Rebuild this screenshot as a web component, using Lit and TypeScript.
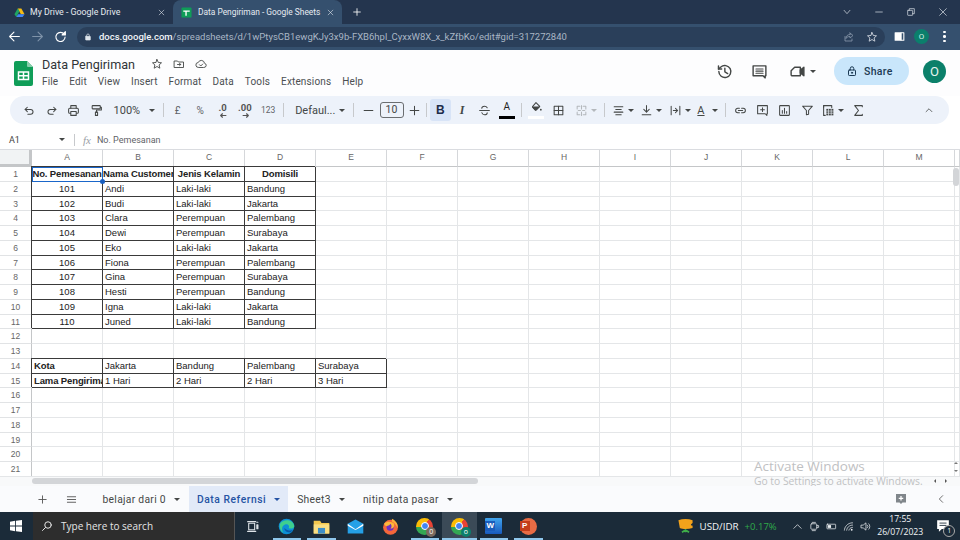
import { LitElement, css, html, svg } from "lit";
import { customElement } from "lit/decorators.js";

const ico = (body: unknown, cls = "ic") => html`<svg class=${cls} viewBox="0 0 24 24" fill="none" stroke="currentColor" stroke-width="2" stroke-linecap="round" stroke-linejoin="round">${body}</svg>`;

const icons = {
  back: svg`<path d="M21 12H4M11 4l-8 8 8 8"/>`,
  forward: svg`<path d="M3 12h17M13 4l8 8-8 8"/>`,
  reload: svg`<path d="M19 8a8.500 8.500 0 1 0 1.500 5"/><path d="M21 3v6h-6z" fill="currentColor"/>`,
  lock: svg`<rect x="5" y="10" width="14" height="11" rx="1" fill="currentColor"/><path d="M8 10V7a4 4 0 0 1 8 0v3"/>`,
  shareUp: svg`<path d="M4 11v9h14v-4M14 4l6 5-6 5v-3c-4 0-6 1-8 4 0-5 3-8 8-8z"/>`,
  star: svg`<path d="M12 3l2.700 6 6.300.600-4.800 4.300 1.500 6.500L12 17l-5.700 3.400 1.500-6.500L3 9.600 9.300 9z"/>`,
  folderMove: svg`<path d="M3 6h6l2 2h10v11H3z"/><path d="M9 13h6M13 10.500l2.500 2.500-2.500 2.500"/>`,
  cloud: svg`<path d="M7 19a5 5 0 0 1-.5-10A6.500 6.500 0 0 1 19 10.500 4.300 4.300 0 0 1 18 19z"/><path d="M9 13.500l2.500 2.500 4-4"/>`,
  history: svg`<path d="M4 12a8.500 8.500 0 1 0 2.800-6.300L3.500 8.500"/><path d="M3.500 4v4.500H8"/><path d="M12.500 7.500V12.500l4 2.500"/>`,
  comment: svg`<path d="M3 4h18v14h-1v3l-3-3H3z"/><path d="M7 8.500h10M7 11.500h10M7 14.500h10" stroke-width="1.600"/>`,
  meet: svg`<path d="M8 6h8v12H4a1.500 1.500 0 0 1-1-1.500V11z"/><path d="M16 10l5-4v12l-5-4z" fill="currentColor"/>`,
  padlock: svg`<rect x="5" y="10" width="14" height="11" rx="1.500"/><path d="M8.500 10V7a3.500 3.500 0 0 1 7 0v3"/><circle cx="12" cy="15.500" r="1.200" fill="currentColor"/>`,
  undo: svg`<path d="M8 6L4 10l4 4"/><path d="M4 10h10a4.500 4.500 0 0 1 0 9H9"/>`,
  redo: svg`<path d="M16 6l4 4-4 4"/><path d="M20 10H10a4.500 4.500 0 0 0 0 9h5"/>`,
  print: svg`<path d="M7 8V3h10v5"/><rect x="3" y="8" width="18" height="9" rx="2"/><path d="M7 14h10v7H7z" fill="#edf2fa"/>`,
  paint: svg`<rect x="4" y="3" width="15" height="6" rx="1"/><path d="M19 6h2v5h-9v4"/><rect x="10" y="15" width="4" height="6"/>`,
  strike: svg`<path d="M3 12h18"/><path d="M17 7c-1-2-3-3-5-3-3 0-5 1.500-5 4M7 16c1 2.500 3 4 5 4 3 0 5-1.500 5-4"/>`,
  fill: svg`<path d="M11 3l7 7-6.500 6.500a1.500 1.500 0 0 1-2 0L5 12a1.500 1.500 0 0 1 0-2z"/><path d="M5 11h12l-5.500 5.500a1.500 1.500 0 0 1-2 0z" fill="currentColor"/><circle cx="20" cy="16" r="1.700" fill="currentColor" stroke="none"/>`,
  borders: svg`<rect x="4" y="4" width="16" height="16"/><path d="M12 4v16M4 12h16"/>`,
  merge: svg`<path d="M4 9V4h5M15 4h5v5M4 15v5h5M15 20h5v-5M12 3v6M12 15v6M6 12h4M18 12h-4"/>`,
  align: svg`<path d="M4 5h16M7 10h10M4 15h16M7 20h10"/>`,
  valign: svg`<path d="M12 3v12M7 10l5 5 5-5M4 20h16"/>`,
  wrap: svg`<path d="M4 4v16M20 4v16M8 12h7M12 8l4 4-4 4"/>`,
  link: svg`<path d="M10 8H7a4 4 0 0 0 0 8h3M14 8h3a4 4 0 0 1 0 8h-3M8 12h8"/>`,
  addComment: svg`<path d="M3 3h18v15h-1v3l-3-3H3z"/><path d="M12 7v7M8.500 10.500h7"/>`,
  chart: svg`<rect x="3" y="3" width="18" height="18" rx="1"/><path d="M8 17v-5M12 17V8M16 17v-3"/>`,
  filter: svg`<path d="M3 4h18l-7 8v7l-4 1v-8z"/>`,
  func: svg`<path d="M3 6V3h15v4"/><path d="M3 3v18h3"/><rect x="8" y="9" width="13" height="12" fill="currentColor" stroke="none"/><path d="M12 9v12M17 9v12M8 13h13M8 17h13" stroke="#edf2fa" stroke-width="1.200"/>`,
  sigma: svg`<path d="M19 5V3H5l7 9-7 9h14v-2"/>`,
  up: svg`<path d="M5 16l7-7 7 7"/>`,
  plus: svg`<path d="M12 4v16M4 12h16"/>`,
  minus: svg`<path d="M4 12h16"/>`,
  menu: svg`<path d="M3 6h18M3 12h18M3 18h18"/>`,
  left: svg`<path d="M16 4l-8 8 8 8"/>`,
  down: svg`<path d="M5 8l7 8 7-8"/>`,
  close: svg`<path d="M4 4l16 16M20 4L4 20"/>`,
  restore: svg`<rect x="4" y="8" width="12" height="12" rx="1"/><path d="M8 8V4h12v12h-4"/>`,
  explore: svg`<rect x="3" y="4" width="13" height="16" rx="1" fill="currentColor" stroke="none"/><rect x="15" y="5" width="5" height="14" fill="#334f6d" stroke="#fff"/>`,
  search: svg`<circle cx="14" cy="10" r="6.500"/><path d="M9 15l-6 6"/>`,
  task: svg`<rect x="5" y="6" width="11" height="12"/><path d="M3 3h15M3 21h15M20 4h2M20 9h2v7h-2z"/>`,
  chev: svg`<path d="M4 16l8-8 8 8"/>`,
  cam: svg`<rect x="4" y="6" width="13" height="12" rx="2"/><path d="M17 10h4v4h-4M7 3h7M7 21h7"/>`,
  batt: svg`<rect x="2" y="7" width="19" height="10" rx="1"/><rect x="4" y="9" width="7" height="6" fill="currentColor" stroke="none"/>`,
  wifi: svg`<path d="M3 20A18 18 0 0 1 21 4M8 20A13 13 0 0 1 21 9M13 20a8 8 0 0 1 8-6" stroke-dasharray="2 1.500"/><circle cx="19" cy="19" r="2" fill="currentColor" stroke="none"/>`,
  vol: svg`<path d="M3 9h4l6-5v16l-6-5H3z"/><path d="M16 9a4 4 0 0 1 0 6M19 6a8 8 0 0 1 0 12"/>`,
  arrowL: svg`<path d="M22 12H4M10 6l-6 6 6 6" stroke-width="4"/>`,
  arrowR: svg`<path d="M2 12h18M14 6l6 6-6 6" stroke-width="4"/>`,
};

const caret = html`<i class="caret"></i>`;
const COLS = ["A", "B", "C", "D", "E", "F", "G", "H", "I", "J", "K", "L", "M", ""];

type Row = [string, string, string, string];
const people: Row[] = [
  ["101", "Andi", "Laki-laki", "Bandung"],
  ["102", "Budi", "Laki-laki", "Jakarta"],
  ["103", "Clara", "Perempuan", "Palembang"],
  ["104", "Dewi", "Perempuan", "Surabaya"],
  ["105", "Eko", "Laki-laki", "Jakarta"],
  ["106", "Fiona", "Perempuan", "Palembang"],
  ["107", "Gina", "Perempuan", "Surabaya"],
  ["108", "Hesti", "Perempuan", "Bandung"],
  ["109", "Igna", "Laki-laki", "Jakarta"],
  ["110", "Juned", "Laki-laki", "Bandung"],
];

// cell text by row number, everything else stays empty
const rowData = new Map<number, string[]>([
  [1, ["No. Pemesanan", "Nama Customer", "Jenis Kelamin", "Domisili"]],
  ...people.map((p, i) => [i + 2, p] as [number, string[]]),
  [14, ["Kota", "Jakarta", "Bandung", "Palembang", "Surabaya"]],
  [15, ["Lama Pengiriman", "1 Hari", "2 Hari", "2 Hari", "3 Hari"]],
]);

@customElement("app-root")
export class AppRoot extends LitElement {
  cell(r: number, c: number) {
    const text = rowData.get(r)?.[c] ?? "";
    const ruled = (r <= 11 && c < 4) || ((r === 14 || r === 15) && c < 5);
    const cls = ["cell"];
    if (ruled) cls.push("ruled");
    if (r === 1 || (r > 13 && c === 0)) cls.push("bold");
    if (r === 1 || (r <= 11 && c === 0)) cls.push("mid");
    if (r === 1 && c === 0) cls.push("picked");
    return html`<div class=${cls.join(" ")}>${text}${r === 1 && c === 0 ? html`<b class="dot"></b>` : ""}</div>`;
  }

  renderGrid() {
    const rows = Array.from({ length: 21 }, (_, i) => i + 1);
    return html`<div class="grid">
      <div class="corner"></div>
      ${COLS.map((c) => html`<div class="colhead">${c}</div>`)}
      ${rows.map((r) => html`<div class="rowhead">${r}</div>${COLS.map((_, c) => this.cell(r, c))}`)}
    </div>`;
  }

  renderChrome() {
    return html`
      <div class="tabs">
        <div class="tab">
          <svg class="fav" viewBox="0 0 24 24"><path d="M8 3h8l7 13h-8z" fill="#f5bc15"/><path d="M8 3L1 16l4 6 7-13z" fill="#1fa463"/><path d="M5 22h14l4-6H9z" fill="#4285f4"/></svg>
          <span>My Drive - Google Drive</span>${ico(icons.close, "x")}
        </div>
        <div class="tab on">
          <svg class="fav" viewBox="0 0 24 24"><rect x="1" y="1" width="22" height="22" rx="2" fill="#0f9d58"/><path d="M5 9h14M11 9v10" stroke="#fff" stroke-width="3"/></svg>
          <span>Data Pengiriman - Google Sheets</span>${ico(icons.close, "x")}
        </div>
        ${ico(icons.plus, "newtab")}
        <div class="winbtns">
          ${ico(icons.down, "w")}${ico(icons.minus, "w")}${ico(icons.restore, "w")}${ico(icons.close, "w")}
        </div>
      </div>
      <div class="addr">
        ${ico(icons.back, "nav")}${ico(icons.forward, "nav dim")}${ico(icons.reload, "nav")}
        <div class="omni">
          ${ico(icons.lock, "lock")}
          <span class="url"><b>docs.google.com</b>/spreadsheets/d/1wPtysCB1ewgKJy3x9b-FXB6hpl_CyxxW8X_x_kZfbKo/edit#gid=317272840</span>
          ${ico(icons.shareUp, "om dim")}${ico(icons.star, "om")}
        </div>
        ${ico(icons.explore, "side")}
        <span class="mini">O</span>
        <span class="kebab"><i></i><i></i><i></i></span>
      </div>`;
  }

  renderHeader() {
    return html`<header class="head">
      <svg class="logo" viewBox="0 0 19 25"><path d="M2 0h11l6 6v17a2 2 0 0 1-2 2H2a2 2 0 0 1-2-2V2a2 2 0 0 1 2-2z" fill="#0f9d58"/><path d="M13 0l6 6h-5a1 1 0 0 1-1-1z" fill="#87ceac"/><path d="M4.500 11h10v7.500h-10zM4.500 14.700h10M9.500 11v7.500" fill="none" stroke="#fff" stroke-width="1.500"/></svg>
      <div class="titles">
        <div class="titleline">
          <span class="title">Data Pengiriman</span>
          ${ico(icons.star, "hi first")}${ico(icons.folderMove, "hi")}${ico(icons.cloud, "hi")}
        </div>
        <nav class="menu">
          ${["File", "Edit", "View", "Insert", "Format", "Data", "Tools", "Extensions", "Help"].map((m) => html`<span>${m}</span>`)}
        </nav>
      </div>
      <div class="actions">
        ${ico(icons.history, "act hist")}${ico(icons.comment, "act cmt")}
        ${ico(icons.meet, "act meet")}${caret}
        <button class="share">${ico(icons.padlock, "pad")}Share</button>
        <span class="avatar">O</span>
      </div>
    </header>`;
  }

  renderToolbar() {
    const b = (i: unknown) => html`<span class="tb">${ico(i, "ti")}</span>`;
    const t = (s: string) => html`<span class="tb num">${s}</span>`;
    const dd = (i: unknown) => html`<span class="tb dd">${ico(i, "ti")}${caret}</span>`;
    return html`<div class="toolbar">
      ${b(icons.undo)}${b(icons.redo)}${b(icons.print)}${b(icons.paint)}
      <span class="zoom">100%${caret}</span><i class="sep"></i>
      ${t("£")}${t("%")}
      <span class="tb deci">.0${ico(icons.arrowL, "darrow")}</span><span class="tb deci">.00${ico(icons.arrowR, "darrow")}</span>
      <span class="tb num small">123</span><i class="sep"></i>
      <span class="font">Defaul...${caret}</span><i class="sep"></i>
      ${b(icons.minus)}<span class="size">10</span>${b(icons.plus)}<i class="sep tight"></i>
      <span class="tb bold-on">B</span><span class="tb ital">I</span>${b(icons.strike)}
      <span class="tb letter">A<u class="ink"></u></span><i class="sep"></i>
      <span class="tb">${ico(icons.fill, "ti fillic")}<u class="ink pale"></u></span>${b(icons.borders)}
      <span class="tb dd off">${ico(icons.merge, "ti")}${caret}</span><i class="sep"></i>
      ${dd(icons.align)}${dd(icons.valign)}${dd(icons.wrap)}
      <span class="tb dd"><span class="rot">A</span>${caret}</span><i class="sep"></i>
      ${b(icons.link)}${b(icons.addComment)}${b(icons.chart)}${b(icons.filter)}
      ${dd(icons.func)}${b(icons.sigma)}
      <span class="collapse">${ico(icons.up, "ti")}</span>
    </div>`;
  }

  renderTaskbar() {
    const chrome = (badge: string, cls: string) => html`<span class="chrome"><i></i><em class=${cls}>${badge}</em></span>`;
    return html`<footer class="taskbar">
      <svg class="win" viewBox="0 0 14 14" fill="#fff"><path d="M0 2l6-1v5.500H0zM7 .800L14 0v6.500H7zM0 7.500h6V13l-6-1zM7 7.500h7V14l-7-1z"/></svg>
      <div class="searchbox">${ico(icons.search, "sic")}<span>Type here to search</span></div>
      <span class="app">${ico(icons.task, "taskic")}</span>
      <span class="app run"><svg class="appic" viewBox="0 0 24 24"><circle cx="12" cy="12" r="11" fill="#0c8fd6"/><path d="M3 8c3-6 17-8 20 3 .5 4-6 5-8 3 2-3-1-6-5-5-4 1-6 7-2 12-4-2-7-8-5-13z" fill="#3ecf8e"/><path d="M9 14c0 4 4 7 9 6l3-3c-3 1-8 1-12-3z" fill="#0a5aa8"/></svg></span>
      <span class="app run"><svg class="appic" viewBox="0 0 24 24"><path d="M1 4h9l2 3h11v15H1z" fill="#f4c84e"/><path d="M1 9h22v13H1z" fill="#fadf83"/><rect x="7" y="14" width="10" height="8" fill="#3e8fc9"/></svg></span>
      <span class="app"><svg class="appic" viewBox="0 0 24 24"><path d="M1 8l11-6 11 6v14H1z" fill="#25a0e6"/><path d="M1 8l11 8 11-8v3l-11 6-11-6z" fill="#fff"/></svg></span>
      <span class="app"><svg class="appic" viewBox="0 0 24 24"><circle cx="12" cy="13" r="10.500" fill="#f4663b"/><path d="M14 1c6 3 9 8 8 13-2-4-4-7-8-9z" fill="#fbb03b"/><circle cx="11.500" cy="13" r="5" fill="#6d2fc4"/><path d="M3 8c2 6 8 2 9 0 2 2 2 5 0 7 4 0 6-3 5-7-3-3-10-4-14 0z" fill="#fcb73a"/></svg></span>
      <span class="app run">${chrome("0", "grey")}</span>
      <span class="app run active">${chrome("o", "teal")}</span>
      <span class="app run"><span class="word"><b>W</b></span></span>
      <span class="app run"><span class="ppt"><b>P</b></span></span>
      <div class="tray">
        <svg class="pot" viewBox="0 0 24 24"><path d="M2 3c6-2 14-2 20 0v4c-4 3-2 3 0 4v3c-6 2-14 2-18 0z" fill="#f3a21b"/><path d="M12 16v4M7 20l5-3 5 3" fill="none" stroke="#3fae49" stroke-width="2.500"/></svg>
        <span class="pair">USD/IDR</span><span class="gain">+0.17%</span>
        ${ico(icons.chev, "ty first")}${ico(icons.cam, "ty")}${ico(icons.batt, "ty")}${ico(icons.wifi, "ty")}${ico(icons.vol, "ty")}
        <div class="clock"><span>17:55</span><span>26/07/2023</span></div>
        <span class="notif"><svg viewBox="0 0 24 24" fill="#fff"><path d="M2 2h20v15H10l-5 5v-5H2z"/><path d="M6 7h12M6 11h12" stroke="#1c2b3a" stroke-width="1.500"/></svg><em>1</em></span>
      </div>
    </footer>`;
  }

  render() {
    return html`
      ${this.renderChrome()}
      ${this.renderHeader()}
      ${this.renderToolbar()}
      <div class="formula">
        <span class="ref">A1</span>${caret}<i class="sep tall"></i>
        <span class="fx">fx</span><span class="val">No. Pemesanan</span>
      </div>
      <main class="sheet">
        ${this.renderGrid()}
        <div class="hbar"><div class="thumb"></div></div>
        <div class="vthumb"></div>
        <div class="varrows"><i class="tup"></i><i class="tdn"></i></div>
        <div class="harrows"><i class="tl"></i><i class="tr"></i></div>
        <div class="activate"><span>Activate Windows</span><small>Go to Settings to activate Windows.</small></div>
      </main>
      <div class="sheets">
        ${ico(icons.plus, "st add")}${ico(icons.menu, "st all")}
        <span class="stab">belajar dari 0${caret}</span>
        <span class="stab cur">Data Refernsi${caret}</span>
        <span class="stab">Sheet3${caret}</span>
        <span class="stab">nitip data pasar${caret}</span>
        <span class="explore"><svg viewBox="0 0 24 24" fill="#80868b"><path d="M2 2h20v17h-7l-3 3-3-3H2z"/><path d="M12 6v9M7.500 10.500h9" stroke="#fff" stroke-width="2.500"/></svg></span>
        ${ico(icons.left, "st coll")}
      </div>
      ${this.renderTaskbar()}
    `;
  }

  static styles = css`
    :host {
      display: flex;
      flex-direction: column;
      width: 960px;
      height: 540px;
      overflow: hidden;
      background: #fff;
      font-family: Roboto, "Liberation Sans", sans-serif;
      color: #3c4043;
    }
    i, em, u { font-style: normal; text-decoration: none; }
    .caret {
      display: inline-block;
      flex: none;
      width: 0;
      height: 0;
      border: 3.2px solid transparent;
      border-top: 3.5px solid #444746;
      border-bottom: 0;
    }

    /* browser frame */
    .tabs {
      flex: none;
      display: flex;
      align-items: flex-end;
      height: 24px;
      background: #24354e;
      color: #e6ebf1;
      font-size: 8.800px;
    }
    .tab {
      display: flex;
      align-items: center;
      gap: 5px;
      width: 173px;
      height: 24px;
      box-sizing: border-box;
      padding: 0 5px 0 14px;
    }
    .tab span { flex: 1; white-space: nowrap; overflow: hidden; }
    .tab.on { width: 169px; padding-left: 8px; gap: 6px; background: #35506e; border-radius: 8px 8px 0 0; font-size: 8.400px; }
    .fav { flex: none; width: 11px; height: 11px; }
    .x { flex: none; width: 7px; height: 7px; color: #e6ebf1; margin-right: 3px; }
    .newtab { width: 10px; height: 10px; margin: 0 0 7px 10px; color: #fff; }
    .winbtns { display: flex; gap: 22px; margin-left: auto; margin-right: 12px; padding-bottom: 7px; color: #cfd6de; }
    .w { width: 10px; height: 10px; stroke-width: 1.800; }
    .addr {
      flex: none;
      display: flex;
      align-items: center;
      height: 26px;
      box-sizing: border-box;
      padding: 0 11px 1px 8px;
      background: #35506e;
      color: #fff;
    }
    .nav { width: 13px; height: 13px; margin-right: 10px; }
    .nav.dim { color: #7f93a9; }
    .omni {
      display: flex;
      align-items: center;
      width: 808px;
      height: 20px;
      box-sizing: border-box;
      padding: 0 7px 0 7px;
      border-radius: 10px;
      background: #2a3f5a;
      color: #a9b6c5;
      font-size: 9.500px;
    }
    .lock { width: 8px; height: 8px; margin-right: 7px; color: #dfe5ec; }
    .url { flex: 1; white-space: nowrap; }
    .url b { font-weight: 500; color: #f1f4f7; }
    .om { width: 12px; height: 12px; margin-left: 11px; color: #dfe5ec; stroke-width: 1.600; }
    .om.dim { color: #8c9bad; }
    .side { width: 13px; height: 13px; margin-left: 8px; color: #fff; }
    .mini {
      width: 15px;
      height: 15px;
      margin-left: 8px;
      border-radius: 50%;
      background: #0b7f6c;
      color: #d5efe7;
      font-size: 8px;
      line-height: 15px;
      text-align: center;
    }
    .kebab { display: flex; flex-direction: column; gap: 2px; margin-left: 14px; }
    .kebab i { width: 2.500px; height: 2.500px; border-radius: 50%; background: #fff; }

    /* docs header */
    .head {
      flex: none;
      display: flex;
      align-items: flex-start;
      height: 46px;
      padding: 0 14px 0 14px;
      background: #fdfdfe;
    }
    .logo { flex: none; width: 19px; height: 25px; margin-top: 11px; }
    .titles { margin-left: 9px; padding-top: 6px; }
    .titleline { display: flex; align-items: center; height: 16px; }
    .title { font-size: 12.600px; color: #303437; }
    .hi { width: 12px; height: 12px; margin-left: 10px; color: #444746; stroke-width: 1.800; }
    .hi.first { margin-left: 16px; }
    .menu { display: flex; gap: 11px; margin-top: 4px; font-size: 10px; color: #4b4f52; letter-spacing: .15px; }
    .actions { margin-left: auto; display: flex; align-items: center; height: 42px; color: #444746; }
    .act { width: 17px; height: 17px; }
    .hist { margin-right: 18px; }
    .cmt { margin-right: 21px; }
    .meet { margin-right: 4px; }
    .share {
      display: flex;
      align-items: center;
      gap: 6px;
      width: 75px;
      height: 28px;
      margin-left: 18px;
      padding: 0 0 0 12px;
      border: 0;
      border-radius: 14px;
      background: #c9e6fb;
      color: #1c3a54;
      font: 500 10.500px Roboto, sans-serif;
      letter-spacing: .3px;
    }
    .pad { width: 12px; height: 12px; }
    .avatar {
      width: 23px;
      height: 23px;
      margin-left: 14px;
      border-radius: 50%;
      background: #0b806a;
      color: #e5f4ef;
      font-size: 13px;
      line-height: 23px;
      text-align: center;
    }

    /* toolbar */
    .toolbar {
      flex: none;
      display: flex;
      align-items: center;
      width: 939px;
      height: 28px;
      box-sizing: border-box;
      margin-left: 10px;
      padding-left: 8px;
      border-radius: 14px;
      background: #edf2fa;
      color: #444746;
      font-size: 11px;
    }
    .tb {
      position: relative;
      flex: none;
      display: flex;
      align-items: center;
      justify-content: center;
      width: 22.400px;
      height: 22px;
    }
    .ti { width: 13px; height: 13px; stroke-width: 1.900; }
    .sep { flex: none; width: 1px; height: 14px; margin: 0 3px; background: #c7c9cc; }
    .sep.tight { margin-left: 0; }
    .zoom { flex: none; display: flex; align-items: center; justify-content: space-between; width: 52px; box-sizing: border-box; padding: 0 5px 0 6px; }
    .num { font-size: 10px; color: #5f6368; }
    .num.small { font-size: 8.500px; width: 24px; }
    .deci { font-size: 9.500px; font-weight: 700; color: #555; padding-bottom: 5px; box-sizing: border-box; }
    .darrow { position: absolute; left: 8px; bottom: 2px; width: 8px; height: 7px; }
    .font { flex: none; display: flex; align-items: center; justify-content: space-between; width: 63px; box-sizing: border-box; padding: 0 5px 0 8px; }
    .size {
      flex: none;
      width: 24px;
      height: 16px;
      box-sizing: border-box;
      border: 1px solid #6a6d70;
      border-radius: 3px;
      font-size: 10.500px;
      line-height: 14px;
      text-align: center;
    }
    .bold-on { width: 21px; border-radius: 3px; background: #d8e4f7; font: 700 12px "Liberation Sans", sans-serif; color: #1c2b4a; }
    .ital { font: italic 700 12px "Liberation Serif", serif; }
    .letter { font-size: 10px; align-items: flex-start; color: #222; padding-top: 2px; box-sizing: border-box; }
    .ink { position: absolute; left: 3px; right: 3px; bottom: 2px; height: 3px; background: #000; }
    .ink.pale { background: #fff; }
    .fillic { margin-top: -5px; }
    .dd { width: 28.500px; gap: 3px; justify-content: flex-start; padding-left: 4px; box-sizing: border-box; }
    .off { width: 31px; padding-left: 5px; color: #b4b8bc; }
    .off .caret { border-top-color: #b4b8bc; }
    .rot { font-size: 11px; text-decoration: underline; width: 12px; }
    .collapse { margin-left: auto; margin-right: 15px; display: flex; }
    .collapse .ti { width: 10px; height: 10px; }

    /* formula bar */
    .formula {
      flex: none;
      display: flex;
      align-items: center;
      height: 25px;
      padding: 6px 0 0 9px;
      box-sizing: border-box;
      font-size: 9px;
      color: #5f6368;
    }
    .ref { width: 50px; color: #444; }
    .tall { margin: 0 0 0 9px; height: 12px; }
    .fx { margin-left: 8px; font: italic 11px "Liberation Serif", serif; color: #9aa0a6; }
    .val { margin-left: 6px; }

    /* sheet area */
    .sheet { position: relative; flex: none; height: 337px; border-top: 1px solid #dadce0; overflow: hidden; box-sizing: border-box; }
    .grid {
      display: grid;
      grid-template-columns: 32px repeat(13, 71px) 5px;
      grid-template-rows: 17px repeat(21, 14.750px);
      font: 9.500px "Liberation Sans", sans-serif;
      color: #222;
    }
    .corner { background: #f1f3f4; border-right: 3px solid #c4c6c8; border-bottom: 3px solid #c4c6c8; box-sizing: border-box; }
    .colhead {
      border-right: 1px solid #d5d7da;
      border-bottom: 1px solid #c4c6c8;
      font-size: 8.500px;
      line-height: 15px;
      text-align: center;
      color: #666;
    }
    .rowhead {
      border-right: 1px solid #c4c6c8;
      border-bottom: 1px solid #e1e3e5;
      font-size: 8.500px;
      line-height: 14px;
      text-align: center;
      color: #666;
    }
    .cell {
      position: relative;
      box-sizing: border-box;
      padding: 0 2px;
      border-right: 1px solid #e4e6e8;
      border-bottom: 1px solid #e4e6e8;
      line-height: 14px;
      white-space: nowrap;
      overflow: hidden;
    }
    .ruled { border-color: #3a3a3a; box-shadow: -1px -1px 0 #3a3a3a; }
    .bold { font-weight: 700; letter-spacing: -.12px; }
    .mid { padding: 0; text-align: center; }
    .picked { overflow: visible; outline: 1.500px solid #1a66c9; outline-offset: -1px; z-index: 2; }
    .picked .dot { position: absolute; right: -3px; bottom: -3px; width: 5px; height: 5px; border-radius: 50%; background: #1a5fc0; }
    .hbar { position: absolute; left: 0; right: 0; bottom: 0; height: 10px; background: #f8f9fa; border-top: 1px solid #e4e6e8; box-sizing: border-box; }
    .thumb { width: 446px; height: 6px; margin: 1px 0 0 32px; border-radius: 3px; background: #d3d5d8; }
    .vthumb { position: absolute; top: 18px; right: 1px; width: 6px; height: 18px; border-radius: 3px; background: #d3d5d8; }
    .varrows { position: absolute; right: 2px; bottom: 12px; display: flex; flex-direction: column; gap: 6px; }
    .harrows { position: absolute; right: 11px; bottom: 3px; display: flex; gap: 9px; }
    .tup, .tdn, .tl, .tr { display: block; width: 0; height: 0; border: 2px solid transparent; }
    .tup { border-bottom-color: #777; }
    .tdn { border-top-color: #777; }
    .tl { border-right-color: #555; }
    .tr { border-left-color: #555; }
    .activate {
      position: absolute;
      left: 754px;
      top: 307px;
      display: flex;
      flex-direction: column;
      font-family: "Open Sans", sans-serif;
      color: #bfc1c3;
      pointer-events: none;
    }
    .activate span { font-size: 13.500px; line-height: 18px; }
    .activate small { font-size: 10.300px; line-height: 13px; white-space: nowrap; }

    /* sheet tabs */
    .sheets {
      flex: none;
      display: flex;
      align-items: center;
      height: 26px;
      background: #fafbfd;
      color: #444746;
      font-size: 10.300px;
      letter-spacing: .3px;
    }
    .st { flex: none; width: 11px; height: 11px; color: #555; }
    .add { margin-left: 37px; }
    .all { margin-left: 18px; margin-right: 16.500px; }
    .stab { display: flex; align-items: center; gap: 8px; height: 26px; padding: 0 9px; box-sizing: border-box; }
    .cur { background: #e2eaf8; color: #2553a3; font-weight: 500; padding: 0 8px; letter-spacing: .55px; }
    .cur .caret { border-top-color: #2553a3; }
    .explore { margin-left: auto; width: 12px; height: 12px; }
    .explore svg { display: block; }
    .coll { margin: 0 14px 0 29px; width: 10px; height: 10px; }

    /* taskbar */
    .taskbar {
      flex: none;
      display: flex;
      align-items: center;
      height: 28px;
      background: #1b2b39;
      color: #f2f4f6;
      font: 11.500px "Open Sans", sans-serif;
    }
    .win { flex: none; width: 12px; height: 12px; margin: 0 11px 0 10px; }
    .searchbox {
      flex: none;
      display: flex;
      align-items: center;
      gap: 8px;
      width: 202px;
      height: 28px;
      box-sizing: border-box;
      padding-left: 8px;
      background: #2d2d2d;
      border-right: 1px solid #555;
      color: #e6e6e6;
      font-size: 10px;
    }
    .sic { width: 12px; height: 12px; }
    .app {
      position: relative;
      flex: none;
      display: flex;
      align-items: center;
      justify-content: center;
      width: 34.500px;
      height: 28px;
    }
    .run::after { content: ""; position: absolute; left: 3px; right: 3px; bottom: 0; height: 2px; background: #8fc7ec; }
    .active { background: #3b4a57; }
    .active::after { left: 0; right: 0; }
    .taskic { width: 13px; height: 13px; color: #dde3e8; }
    .appic { width: 17px; height: 17px; }
    .chrome { position: relative; width: 17px; height: 17px; border-radius: 50%; background: conic-gradient(from 30deg, #e94335 0 120deg, #34a853 120deg 240deg, #fbbc05 240deg 360deg); display: block; }
    .chrome i { position: absolute; left: 4.500px; top: 4.500px; width: 8px; height: 8px; border-radius: 50%; background: #4285f4; border: .5px solid #fff; box-sizing: border-box; }
    .chrome em { position: absolute; right: -3px; bottom: -2px; width: 10px; height: 10px; border-radius: 50%; font-size: 7px; line-height: 10px; text-align: center; color: #fff; }
    .grey { background: #7b6a5e; }
    .teal { background: #0b7f6c; }
    .word { width: 17px; height: 16px; display: flex; align-items: center; background: linear-gradient(#41a5ee, #185abd); border-radius: 1px; }
    .word b { width: 10px; height: 10px; background: #1a5cbb; font: 700 8px/10px "Liberation Sans", sans-serif; text-align: center; color: #fff; }
    .ppt { width: 17px; height: 17px; display: flex; align-items: center; background: #e86c45; border-radius: 50%; }
    .ppt b { width: 10px; height: 10px; background: #c43e1c; font: 700 8px/10px "Liberation Sans", sans-serif; text-align: center; color: #fff; }
    .tray { display: flex; align-items: center; flex: 1; min-width: 0; }
    .pot { flex: none; width: 17px; height: 17px; margin-left: 131px; margin-right: 6px; }
    .pair { font-size: 9.800px; }
    .gain { margin-left: 6px; font-size: 9.500px; color: #2faa4a; }
    .ty { flex: none; width: 11px; height: 11px; margin-left: 6px; color: #eceff1; stroke-width: 1.600; }
    .ty.first { margin-left: 15.500px; }
    .clock { display: flex; flex-direction: column; align-items: center; margin-left: 6px; font-size: 8.700px; line-height: 13px; }
    .notif { position: relative; width: 14px; height: 14px; margin-left: 13px; }
    .notif svg { display: block; }
    .notif em { position: absolute; right: -5px; bottom: -4px; width: 10px; height: 10px; border-radius: 50%; border: 1px solid #aaa; font-size: 7px; line-height: 10px; text-align: center; background: #1b2b39; }
  `;
}
